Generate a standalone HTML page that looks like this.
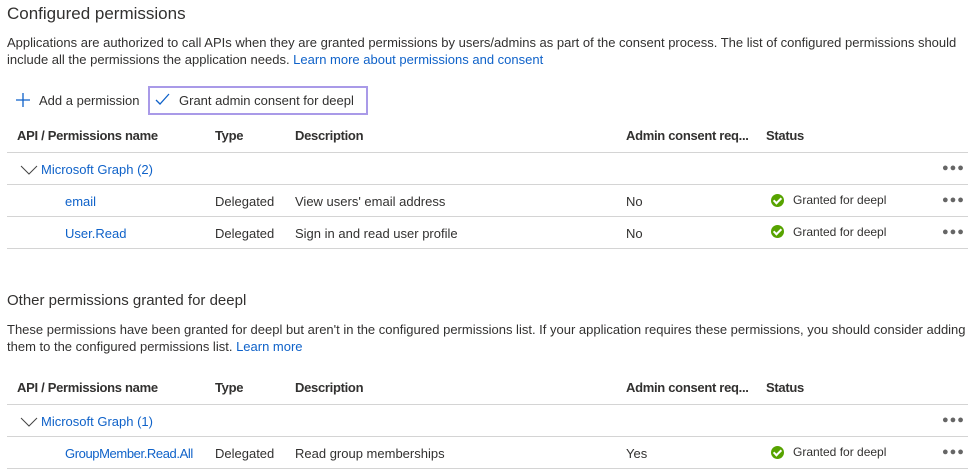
<!DOCTYPE html><html><head><style>
body{margin:0;width:974px;height:475px;background:#fff;font-family:"Liberation Sans",sans-serif;color:#323130;position:relative;overflow:hidden}
.a{position:absolute;white-space:nowrap;font-size:13px}
.h{font-size:17px}
.b{font-weight:bold;font-size:13px;letter-spacing:-0.3px}
.l{color:#0f62c9}
.ln{position:absolute;left:7px;width:961px;height:1px;background:#d4d4d4}
.dots{position:absolute;left:942px;font-size:11px;letter-spacing:1px;color:#666}
.ok{position:absolute;width:13px;height:13px;border-radius:50%;background:#57a300}
.ok:after{content:"";position:absolute;left:4px;top:2px;width:3px;height:6px;border:solid #fff;border-width:0 2px 2px 0;transform:rotate(45deg)}
</style></head><body>
<div class="a h" style="left:7px;top:4px">Configured permissions</div>
<div class="a" style="left:7px;top:35px">Applications are authorized to call APIs when they are granted permissions by users/admins as part of the consent process. The list of configured permissions should</div>
<div class="a" style="left:7px;top:52px">include all the permissions the application needs. <span class="l">Learn more about permissions and consent</span></div>
<svg style="position:absolute;left:15px;top:92px" width="16" height="16"><path d="M8 1v14M1 8h14" stroke="#0f62c9" stroke-width="1.3"/></svg>
<div class="a" style="left:39px;top:93px">Add a permission</div>
<div style="position:absolute;left:148px;top:86px;width:216px;height:25px;border:2px solid #a99ae8"></div>
<svg style="position:absolute;left:155px;top:93px" width="16" height="14"><path d="M1 7l4 4 9-10" stroke="#0f62c9" stroke-width="1.3" fill="none"/></svg>
<div class="a" style="left:179px;top:93px">Grant admin consent for deepl</div>

<div class="a b" style="left:17px;top:128px">API / Permissions name</div>
<div class="a b" style="left:215px;top:128px">Type</div>
<div class="a b" style="left:295px;top:128px">Description</div>
<div class="a b" style="left:626px;top:128px">Admin consent req...</div>
<div class="a b" style="left:766px;top:128px">Status</div>
<div class="ln" style="top:152px"></div>
<svg style="position:absolute;left:20px;top:165px" width="18" height="10"><path d="M1 1l8 8 8-8" stroke="#444" stroke-width="1" fill="none"/></svg>
<div class="a l" style="left:41px;top:162px">Microsoft Graph (2)</div>
<div class="dots" style="top:162px">●●●</div>
<div class="ln" style="top:184px"></div>
<div class="a l" style="left:65px;top:194px">email</div>
<div class="a" style="left:215px;top:194px">Delegated</div>
<div class="a" style="left:295px;top:194px">View users' email address</div>
<div class="a" style="left:626px;top:194px">No</div>
<div class="ok" style="left:771px;top:194px"></div>
<div class="a" style="left:793px;top:193px;font-size:12px">Granted for deepl</div>
<div class="dots" style="top:194px">●●●</div>
<div class="ln" style="top:216px"></div>
<div class="a l" style="left:65px;top:226px">User.Read</div>
<div class="a" style="left:215px;top:226px">Delegated</div>
<div class="a" style="left:295px;top:226px">Sign in and read user profile</div>
<div class="a" style="left:626px;top:226px">No</div>
<div class="ok" style="left:771px;top:225px"></div>
<div class="a" style="left:793px;top:225px;font-size:12px">Granted for deepl</div>
<div class="dots" style="top:226px">●●●</div>
<div class="ln" style="top:248px"></div>

<div class="a" style="left:7px;top:292px;font-size:15px">Other permissions granted for deepl</div>
<div class="a" style="left:7px;top:322px">These permissions have been granted for deepl but aren't in the configured permissions list. If your application requires these permissions, you should consider adding</div>
<div class="a" style="left:7px;top:339px">them to the configured permissions list. <span class="l">Learn more</span></div>

<div class="a b" style="left:17px;top:380px">API / Permissions name</div>
<div class="a b" style="left:215px;top:380px">Type</div>
<div class="a b" style="left:295px;top:380px">Description</div>
<div class="a b" style="left:626px;top:380px">Admin consent req...</div>
<div class="a b" style="left:766px;top:380px">Status</div>
<div class="ln" style="top:404px"></div>
<svg style="position:absolute;left:20px;top:417px" width="18" height="10"><path d="M1 1l8 8 8-8" stroke="#444" stroke-width="1" fill="none"/></svg>
<div class="a l" style="left:41px;top:414px">Microsoft Graph (1)</div>
<div class="dots" style="top:414px">●●●</div>
<div class="ln" style="top:436px"></div>
<div class="a l" style="left:65px;top:446px;letter-spacing:-0.4px">GroupMember.Read.All</div>
<div class="a" style="left:215px;top:446px">Delegated</div>
<div class="a" style="left:295px;top:446px">Read group memberships</div>
<div class="a" style="left:626px;top:446px">Yes</div>
<div class="ok" style="left:771px;top:446px"></div>
<div class="a" style="left:793px;top:445px;font-size:12px">Granted for deepl</div>
<div class="dots" style="top:446px">●●●</div>
<div class="ln" style="top:468px"></div>
</body></html>
